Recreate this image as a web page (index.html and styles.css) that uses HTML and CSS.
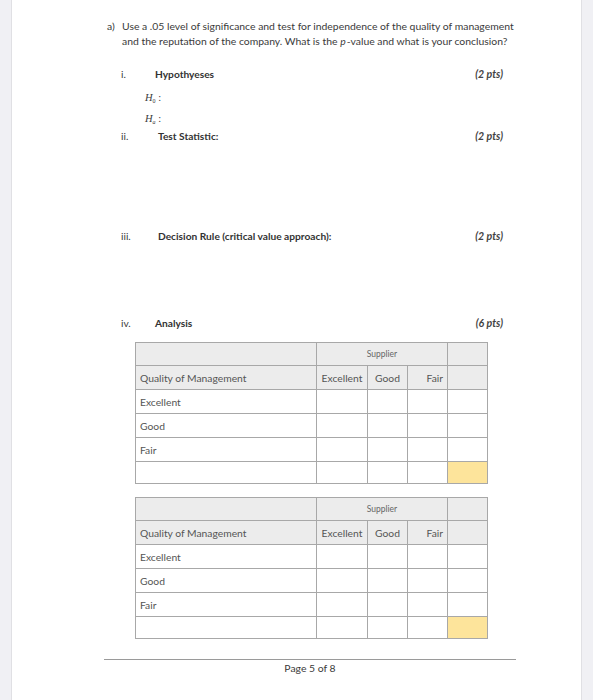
FILE: index.html
```html
<!DOCTYPE html>
<html>
<head>
<meta charset="utf-8">
<link rel="stylesheet" href="styles.css">
</head>
<body>
<div class="page">
  <div class="question">
    <span class="qlabel">a)</span>
    <p class="qtext"><span class="ql">Use a .05 level of significance and test for independence of the quality of management</span><span class="ql">and the reputation of the company. What is the <i class="pv">p</i>-value and what is your conclusion?</span></p>
  </div>

  <div class="item item-i">
    <span class="num">i.</span>
    <span class="title">Hypothyeses</span>
    <span class="pts">(2 pts)</span>
  </div>
  <div class="hyp">
    <div class="h"><i>H</i><sub>0</sub> :</div>
    <div class="h"><i>H</i><sub><i>a</i></sub> :</div>
  </div>

  <div class="item item-ii">
    <span class="num">ii.</span>
    <span class="title t2">Test Statistic:</span>
    <span class="pts">(2 pts)</span>
  </div>

  <div class="item item-iii">
    <span class="num">iii.</span>
    <span class="title t2">Decision Rule (critical value approach):</span>
    <span class="pts">(2 pts)</span>
  </div>

  <div class="item item-iv">
    <span class="num">iv.</span>
    <span class="title">Analysis</span>
    <span class="pts">(6 pts)</span>
  </div>

  <table class="ct ct1">
    <colgroup><col class="c1"><col class="c2"><col class="c3"><col class="c4"><col class="c5"></colgroup>
    <tr class="r-sup"><td class="sh"></td><td class="sh sup" colspan="3">Supplier</td><td class="sh"></td></tr>
    <tr class="r-head"><td class="sh">Quality of Management</td><td class="sh ctr">Excellent</td><td class="sh ctr">Good</td><td class="sh rt">Fair</td><td class="sh"></td></tr>
    <tr class="r"><td>Excellent</td><td></td><td></td><td></td><td></td></tr>
    <tr class="r"><td>Good</td><td></td><td></td><td></td><td></td></tr>
    <tr class="r"><td>Fair</td><td></td><td></td><td></td><td></td></tr>
    <tr class="r-last"><td></td><td></td><td></td><td></td><td class="yl"></td></tr>
  </table>

  <table class="ct ct2">
    <colgroup><col class="c1"><col class="c2"><col class="c3"><col class="c4"><col class="c5"></colgroup>
    <tr class="r-sup"><td class="sh"></td><td class="sh sup" colspan="3">Supplier</td><td class="sh"></td></tr>
    <tr class="r-head"><td class="sh">Quality of Management</td><td class="sh ctr">Excellent</td><td class="sh ctr">Good</td><td class="sh rt">Fair</td><td class="sh"></td></tr>
    <tr class="r"><td>Excellent</td><td></td><td></td><td></td><td></td></tr>
    <tr class="r"><td>Good</td><td></td><td></td><td></td><td></td></tr>
    <tr class="r"><td>Fair</td><td></td><td></td><td></td><td></td></tr>
    <tr class="r-last"><td></td><td></td><td></td><td></td><td class="yl"></td></tr>
  </table>

  <footer class="footer">
    <div class="rule"></div>
    <div class="pageno">Page 5 of 8</div>
  </footer>
</div>
</body>
</html>
```

FILE: styles.css
```css
html, body {
  margin: 0;
  padding: 0;
  background: #f0f0f4;
}
body {
  font-family: Lato, "Open Sans", sans-serif;
  color: #3a3a3a;
}
.page {
  margin-left: 11px;
  width: 571px;
  height: 700px;
  background: #ffffff;
  border-left: 1px solid #e0e0e4;
  border-right: 1px solid #e0e0e4;
  box-sizing: border-box;
  padding-top: 19px;
  overflow: hidden;
}
.question {
  display: flex;
  margin-left: 95px;
  width: 408px;
  font-size: 10.4px;
  line-height: 15px;
}
.qlabel {
  width: 15px;
  flex: none;
}
.qtext {
  margin: 0;
}
.ql {
  display: block;
  white-space: nowrap;
}
.pv {
  padding-right: 1px;
}
.item {
  display: grid;
  grid-template-columns: 34px 1fr auto;
  margin-left: 109px;
  width: 382px;
  font-size: 10.2px;
  line-height: 14px;
}
.title {
  font-weight: 700;
  color: #333;
}
.t2 {
  padding-left: 3px;
}
.pts {
  font-style: italic;
  font-weight: 700;
  font-size: 10.6px;
  color: #444;
}
.item-i { margin-top: 18px; }
.hyp {
  margin-left: 133px;
  margin-top: 8px;
  font-family: "Liberation Serif", serif;
  font-size: 10.5px;
  line-height: 17px;
}
.hyp sub {
  font-size: 6px;
  vertical-align: -2px;
}
.item-ii { margin-top: -2px; }
.item-iii { margin-top: 86px; }
.item-iv { margin-top: 73px; }

.ct {
  border-collapse: collapse;
  margin-left: 123px;
  width: 352px;
  table-layout: fixed;
  font-size: 10.3px;
  color: #555;
}
.ct1 { margin-top: 12px; }
.ct2 { margin-top: 13px; }
.c1 { width: 181px; }
.c2 { width: 51px; }
.c3 { width: 40px; }
.c4 { width: 40px; }
.c5 { width: 40px; }
.ct td {
  border: 1px solid #a8a8a8;
  padding: 0 4px;
  white-space: nowrap;
  overflow: hidden;
}
.sh { background: #ececec; }
.sup {
  text-align: center;
  font-size: 8.5px;
  color: #666;
}
.ctr { text-align: center; padding: 0 2px; }
.rt { text-align: right; }
.r-sup td { height: 22px; }
.r-head td { height: 23px; }
.r td { height: 23px; }
.r-last td { height: 21px; }
.yl { background: #fde49b; }

.footer {
  margin-top: 20px;
  margin-left: 92px;
  width: 412px;
}
.rule {
  height: 1px;
  background: #9a9a9a;
}
.pageno {
  text-align: center;
  font-size: 10.4px;
  line-height: 16px;
}
```
